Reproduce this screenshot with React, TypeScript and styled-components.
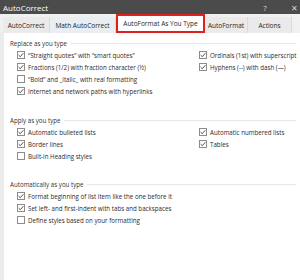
import React from "react";
import styled, { createGlobalStyle } from "styled-components";

const Global = createGlobalStyle`
  html, body { margin: 0; padding: 0; background: #ffffff; }
  body { font-family: "Open Sans", "Noto Sans", sans-serif; width: 300px; height: 280px; overflow: hidden; }
`;

const Window = styled.div`
  width: 300px;
  height: 280px;
  display: flex;
  flex-direction: column;
  background: #f0f0f0;
  overflow: hidden;
`;

const TitleBar = styled.div`
  height: 14px;
  background: #4b4b4b;
  color: #ffffff;
  display: flex;
  align-items: center;
  padding-left: 3px;
  font-size: 8px;
  flex-shrink: 0;
`;

const TitleText = styled.div`
  flex: 1;
`;

const TitleButton = styled.div<{ $w: number }>`
  width: ${(p) => p.$w}px;
  text-align: center;
  color: #d8d8d8;
  font-size: 8px;
`;

const TabStrip = styled.div`
  height: 19px;
  display: flex;
  align-items: flex-end;
  padding-left: 3px;
  flex-shrink: 0;
  background: #f0f0f0;
`;

const Tab = styled.div<{ $w: number; $active?: boolean; $tint?: boolean }>`
  width: ${(p) => p.$w}px;
  height: ${(p) => (p.$active ? 19 : 16)}px;
  box-sizing: border-box;
  display: flex;
  align-items: center;
  justify-content: center;
  font-size: 6.5px;
  color: #262626;
  background: ${(p) => (p.$active ? "#ffffff" : p.$tint ? "#e9eef3" : "#eaeaea")};
  border: ${(p) => (p.$active ? "2px solid #e0201c" : "none")};
  border-right: ${(p) => (p.$active ? "2px solid #e0201c" : "1px solid #dadada")};
  border-bottom: ${(p) => (p.$active ? "2px solid #e0201c" : "none")};
`;

const Body = styled.div`
  flex: 1;
  display: flex;
`;

const LeftStrip = styled.div`
  width: 4px;
  background: #ececec;
`;

const Panel = styled.div`
  flex: 1;
  background: #ffffff;
  padding-top: 4px;
  display: flex;
  flex-direction: column;
`;

const Section = styled.div<{ $gap: number }>`
  margin-bottom: ${(p) => p.$gap}px;
`;

const Heading = styled.div`
  height: 12px;
  display: flex;
  align-items: center;
  padding-left: 6px;
  padding-right: 4px;
  font-size: 6.2px;
  color: #333333;
  &::after {
    content: "";
    flex: 1;
    height: 1px;
    background: #e8e8e8;
    margin-left: 3px;
  }
`;

const Grid = styled.div`
  display: grid;
  grid-template-columns: 182px 1fr;
  padding-left: 13px;
`;

const Col = styled.div`
  display: flex;
  flex-direction: column;
`;

const Row = styled.div`
  height: 12px;
  display: flex;
  align-items: center;
  font-size: 6.2px;
  color: #2b2b2b;
  white-space: nowrap;
`;

const Box = styled.div`
  width: 8px;
  height: 8px;
  box-sizing: border-box;
  border: 1px solid #8c8c8c;
  background: #ffffff;
  margin-right: 3px;
  display: flex;
  align-items: center;
  justify-content: center;
  flex-shrink: 0;
`;

const Check = ({ on }: { on: boolean }) => (
  <Box>
    {on && (
      <svg width="6" height="6" viewBox="0 0 6 6">
        <path d="M0.6 3.1 L2.3 4.7 L5.4 1.2" fill="none" stroke="#404040" strokeWidth="0.9" />
      </svg>
    )}
  </Box>
);

type Item = [string, boolean];

const Item = ({ item }: { item: Item }) => (
  <Row>
    <Check on={item[1]} />
    <span>{item[0]}</span>
  </Row>
);

const sections: { title: string; left: Item[]; right: Item[]; gap: number }[] = [
  {
    title: "Replace as you type",
    left: [
      ["\u201CStraight quotes\u201D with \u201Csmart quotes\u201D", true],
      ["Fractions (1/2) with fraction character (\u00BD)", true],
      ["\u201CBold\u201D and _italic_ with real formatting", false],
      ["Internet and network paths with hyperlinks", true],
    ],
    right: [
      ["Ordinals (1st) with superscript", true],
      ["Hyphens (--) with dash (\u2014)", true],
    ],
    gap: 17,
  },
  {
    title: "Apply as you type",
    left: [
      ["Automatic bulleted lists", true],
      ["Border lines", true],
      ["Built-in Heading styles", false],
    ],
    right: [
      ["Automatic numbered lists", true],
      ["Tables", true],
    ],
    gap: 16,
  },
  {
    title: "Automatically as you type",
    left: [
      ["Format beginning of list item like the one before it", true],
      ["Set left- and first-indent with tabs and backspaces", true],
      ["Define styles based on your formatting", false],
    ],
    right: [],
    gap: 0,
  },
];

export default function App() {
  return (
    <>
      <Global />
      <Window>
        <TitleBar>
          <TitleText>AutoCorrect</TitleText>
          <TitleButton $w={46}>?</TitleButton>
          <TitleButton $w={12}>✕</TitleButton>
        </TitleBar>
        <TabStrip>
          <Tab $w={47}>AutoCorrect</Tab>
          <Tab $w={66} $tint>Math AutoCorrect</Tab>
          <Tab $w={89} $active>AutoFormat As You Type</Tab>
          <Tab $w={43}>AutoFormat</Tab>
          <Tab $w={44}>Actions</Tab>
        </TabStrip>
        <Body>
          <LeftStrip />
          <Panel>
            {sections.map((s) => (
              <Section key={s.title} $gap={s.gap}>
                <Heading>{s.title}</Heading>
                <Grid>
                  <Col>
                    {s.left.map((it) => (
                      <Item key={it[0]} item={it} />
                    ))}
                  </Col>
                  <Col>
                    {s.right.map((it) => (
                      <Item key={it[0]} item={it} />
                    ))}
                  </Col>
                </Grid>
              </Section>
            ))}
          </Panel>
        </Body>
      </Window>
    </>
  );
}
